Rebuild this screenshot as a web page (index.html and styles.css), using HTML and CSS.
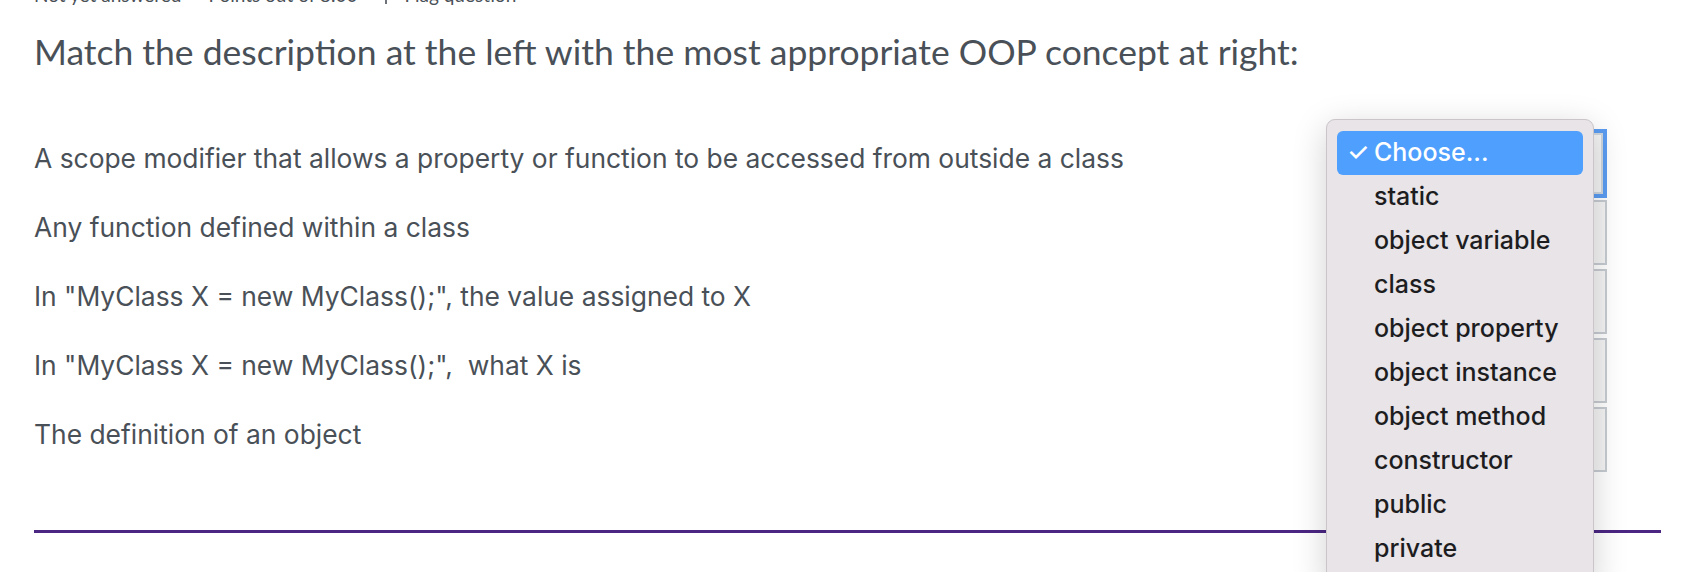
FILE: index.html
```html
<!DOCTYPE html>
<html lang="en">

<head>
    <meta charset="UTF-8">
    <meta name="viewport" content="width=device-width, initial-scale=1.0">
    <title>Question</title>
    <link rel="stylesheet" href="styles.css">
</head>

<body>
    <div class="que">
        <div class="state">
            <span>Not yet answered</span>
            <span>Points out of 8.00</span>
            <span class="flag">
                <svg width="14" height="18" viewBox="0 0 14 18"><path d="M2 1v17M2 2h10l-3 4 3 4H2" fill="none" stroke="#495057" stroke-width="1.6"/></svg>
                Flag question
            </span>
        </div>
        <h2 class="qtext">Match the description at the left with the most appropriate OOP concept at right:</h2>
        <div class="answers">
            <div class="row">
                <span class="text">A scope modifier that allows a property or function to be accessed from outside a class</span>
                <div class="select focused"></div>
            </div>
            <div class="row">
                <span class="text">Any function defined within a class</span>
                <div class="select"></div>
            </div>
            <div class="row">
                <span class="text">In "MyClass X = new MyClass();", the value assigned to X</span>
                <div class="select"></div>
            </div>
            <div class="row">
                <span class="text">In "MyClass X = new MyClass();",&nbsp; what X is</span>
                <div class="select"></div>
            </div>
            <div class="row">
                <span class="text">The definition of an object</span>
                <div class="select"></div>
            </div>
        </div>
        <div class="line"></div>
    </div>

    <!-- open dropdown of the first select -->
    <ul class="menu">
        <li class="active"><span class="tick">&#10003;</span>Choose...</li>
        <li>static</li>
        <li>object variable</li>
        <li>class</li>
        <li>object property</li>
        <li>object instance</li>
        <li>object method</li>
        <li>constructor</li>
        <li>public</li>
        <li>private</li>
    </ul>
</body>

</html>
```

FILE: styles.css
```css
* {
    margin: 0;
    padding: 0;
    box-sizing: border-box;
}

body {
    background: #fff;
    color: #495057;
    overflow: hidden;
    height: 572px;
}

.que {
    padding: 0 43px 0 34px;
}

.state {
    display: flex;
    gap: 27px;
    margin-top: -17px;
    font-family: "Lato", sans-serif;
    font-size: 19px;
    line-height: 24px;
}

.flag {
    display: flex;
    align-items: center;
    gap: 6px;
}

.qtext {
    font-family: "Lato", sans-serif;
    font-weight: 400;
    font-size: 35.5px;
    line-height: 44px;
    margin-top: 23px;
}

.answers {
    margin-top: 55px;
}

.row {
    display: flex;
    justify-content: space-between;
    align-items: center;
    height: 69px;
    padding-right: 54px;
}

.text {
    font-family: "Inter", sans-serif;
    font-size: 26.4px;
    padding-bottom: 12px;
}

.select {
    width: 280px;
    height: 65px;
    border: 2px solid #c6cbd1;
    background: #f4f4f4;
}

.select.focused {
    height: 69px;
    border: 4px solid #5b9cf2;
    box-shadow: inset 0 0 0 2px #cfd6de;
}

.line {
    height: 3px;
    background: #4b2683;
    margin-top: 56px;
}

.menu {
    position: absolute;
    left: 1326px;
    top: 119px;
    width: 268px;
    height: 470px;
    list-style: none;
    background: #e8e4e7;
    border: 1px solid #c9c5c8;
    border-radius: 9px;
    padding: 11px 10px;
    box-shadow: 0 8px 34px rgba(0, 0, 0, 0.18);
    font-family: "Inter", sans-serif;
    font-size: 25px;
    font-weight: 500;
    color: #1d1d1f;
}

.menu li {
    height: 44px;
    line-height: 43px;
    padding-left: 37px;
    position: relative;
}

.menu li.active {
    background: #4f9ffe;
    color: #fff;
    border-radius: 6px;
}

.tick {
    position: absolute;
    left: 10px;
}
```
